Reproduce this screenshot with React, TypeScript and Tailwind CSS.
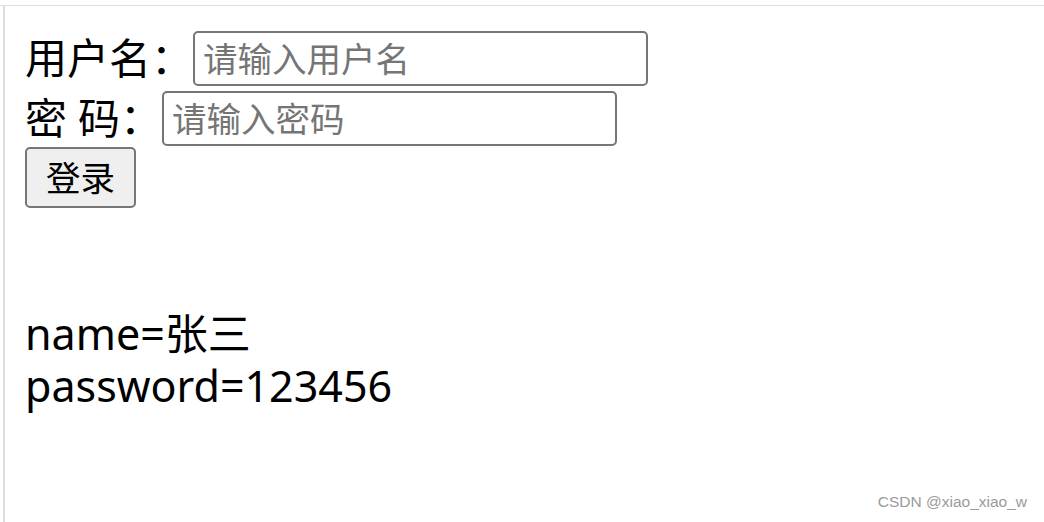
import React from 'react';

const font = { fontFamily: '"Noto Sans", "Noto Sans CJK SC", sans-serif' };

export default function App() {
  return (
    <div className="relative h-[522px] w-[1044px] overflow-hidden bg-white pt-[5px]" style={font}>
      <div className="h-full border-t border-[#dedede]">
        <div className="ml-[3px] h-full border-l-2 border-[#dcdcdc] pl-[20px] text-black">
          <div className="flex h-[22px]" />
          {/* 登录表单 */}
          <div className="flex h-[60px] items-center text-[42px]">
            <span className="leading-none">用户名：</span>
            <input
              placeholder="请输入用户名"
              className="h-[55px] w-[455px] rounded-[5px] border-2 border-[#767676] px-[8px] text-[34.5px] text-black placeholder:text-[#757575] outline-none"
            />
          </div>
          <div className="flex h-[60px] items-center text-[42px]">
            <span className="leading-none">密 码：</span>
            <input
              type="password"
              placeholder="请输入密码"
              className="h-[55px] w-[455px] rounded-[5px] border-2 border-[#767676] px-[8px] text-[34.5px] text-black placeholder:text-[#757575] outline-none"
            />
          </div>
          <button className="-mt-[1px] flex h-[61px] w-[111px] items-center justify-center rounded-[5px] border-2 border-[#767676] bg-[#efefef] text-[34.5px]">
            登录
          </button>
          <div className="mt-[100px] flex flex-col text-[43px]">
            <div className="h-[52px] leading-[52px]">name=张三</div>
            <div className="h-[52px] leading-[52px]">password=123456</div>
          </div>
        </div>
      </div>
      <div
        className="absolute bottom-[9px] right-[17px] text-[15.5px] text-[#9a9a9a]"
        style={{ fontFamily: '"Liberation Sans", Arial, sans-serif' }}
      >
        CSDN @xiao_xiao_w
      </div>
    </div>
  );
}
